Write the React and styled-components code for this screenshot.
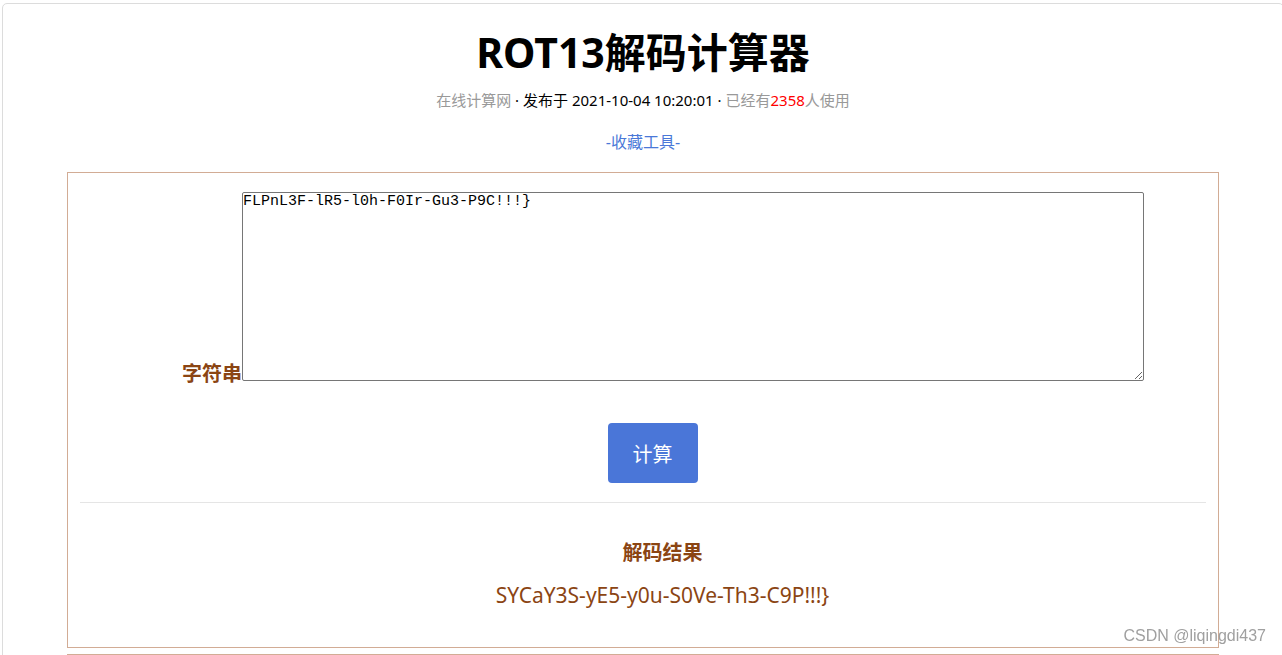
import React, { useState } from 'react'
import styled, { createGlobalStyle } from 'styled-components'

const GlobalStyle = createGlobalStyle`
    html, body {
        margin: 0;
        padding: 0;
        background: #fff;
        overflow: hidden;
    }
    body {
        font-family: "Noto Sans", "Noto Sans CJK SC", sans-serif;
        color: #333;
    }
`

const Card = styled.div`
    box-sizing: border-box;
    width: 1282px;
    margin: 3px 0 0 2px;
    padding-top: 24px;
    border: 1px solid #dcdcdc;
    border-radius: 5px;
    background: #fff;
    min-height: 660px;
`
const Title = styled.h1`
    margin: 0;
    text-align: center;
    font: bold 41px/48px "Noto Sans", "Noto Sans CJK SC", sans-serif;
    color: #000;
`
const Meta = styled.p`
    margin: 14px 0 0;
    text-align: center;
    font-size: 15px;
    line-height: 20px;
    color: #000;
`
const Muted = styled.span`
    color: ${p => (p.red ? '#ff0000' : '#999')};
`
const Fav = styled.a`
    display: block;
    margin-top: 22px;
    text-align: center;
    font-size: 16px;
    line-height: 20px;
    color: #4a78d8;
    text-decoration: none;
    cursor: pointer;
`
const Box = styled.div`
    width: 1152px;
    box-sizing: border-box;
    margin: ${p => p.next ? '6px' : '20px'} auto 0;
    border: 1px solid #d2ac95;
    padding: ${p => p.next ? '40px 0' : '19px 0 37px'};
`
const Row = styled.div`
    font-size: 0;
    line-height: 0;
`
const Label = styled.label`
    display: inline-block;
    width: 174px;
    text-align: right;
    font: bold 20px/20px "Noto Sans CJK SC", sans-serif;
    color: #8b4513;
`
const Area = styled.textarea`
    box-sizing: border-box;
    width: 902px;
    height: 189px;
    padding: 0;
    border: 1px solid #767676;
    border-radius: 2px;
    font: 15px/18px "Liberation Mono", monospace;
    color: #000;
    vertical-align: baseline;
    resize: both;
    outline: none;
`
const Center = styled.div`
    text-align: center;
    padding-left: ${p => p.shift}px;
`
const Button = styled.button`
    width: 90px;
    height: 60px;
    margin-top: 40px;
    border: 0;
    border-radius: 4px;
    background: #4a76d8;
    color: #fff;
    font: 20px "Noto Sans CJK SC", sans-serif;
    cursor: pointer;
`
const Rule = styled.hr`
    margin: 19px 12px 0;
    border: 0;
    border-top: 1px solid #e5e5e5;
`
const ResultTitle = styled.h3`
    margin: 35px 0 0;
    font: bold 20px/28px "Noto Sans CJK SC", sans-serif;
    color: #8b4513;
`
const Result = styled.div`
    margin-top: 14px;
    font: 21px/30px "Noto Sans", "Noto Sans CJK SC", sans-serif;
    color: #8b4513;
`
const Watermark = styled.div`
    position: fixed;
    right: 16px;
    bottom: 10px;
    font: 16px "Liberation Sans", Arial, sans-serif;
    color: #a0a0a0;
`

const rot13 = s => s.replace(/[a-zA-Z]/g, c => {
    const base = c <= 'Z' ? 65 : 97
    return String.fromCharCode((c.charCodeAt(0) - base + 13) % 26 + base)
})

const INPUT = 'FLPnL3F-lR5-l0h-F0Ir-Gu3-P9C!!!}'

const App = () => {
    const [text, setText] = useState(INPUT)
    const [result, setResult] = useState(rot13(INPUT))

    return (
        <>
            <GlobalStyle />
            <Card>
                <Title>ROT13解码计算器</Title>
                <Meta>
                    <Muted>在线计算网</Muted> · 发布于 2021-10-04 10:20:01 · <Muted>已经有</Muted><Muted red>2358</Muted><Muted>人使用</Muted>
                </Meta>
                <Fav>-收藏工具-</Fav>
                <Box>
                    <Row>
                        <Label htmlFor="str">字符串</Label>
                        <Area id="str" value={text} onChange={e => setText(e.target.value)} />
                    </Row>
                    <Center shift={19}>
                        <Button onClick={() => setResult(rot13(text))}>计算</Button>
                    </Center>
                    <Rule />
                    <Center shift={39}>
                        <ResultTitle>解码结果</ResultTitle>
                        <Result>{result}</Result>
                    </Center>
                </Box>
                <Box next />
            </Card>
            <Watermark>CSDN @liqingdi437</Watermark>
        </>
    )
}

export default App
